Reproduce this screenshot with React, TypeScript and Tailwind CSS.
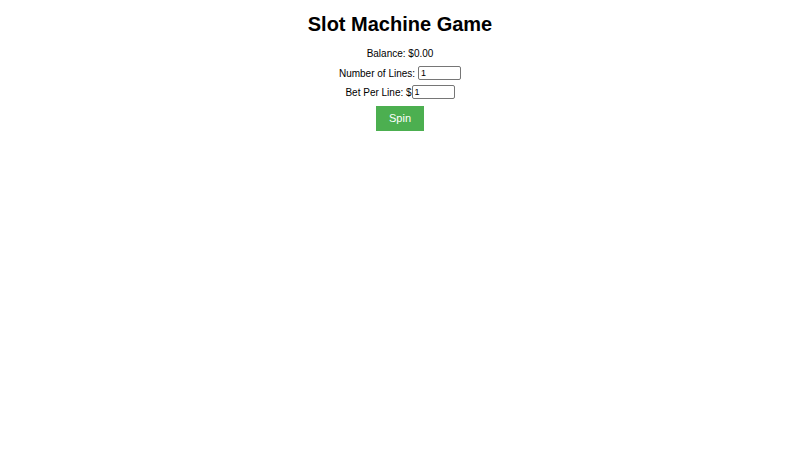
import { useState } from "react";

export default function App() {
  const [balance] = useState(0);
  const [lines, setLines] = useState("1");
  const [bet, setBet] = useState("1");

  return (
    <div className="min-h-[450px] bg-white text-center text-black font-['Liberation_Sans',Arial,sans-serif]">
      <h1 className="pt-[13px] pb-[12px] text-[20px] leading-[23px] font-bold">
        Slot Machine Game
      </h1>

      <div className="mb-[6px] text-[10px] leading-[12px]">
        Balance: ${balance.toFixed(2)}
      </div>

      <div className="mb-[5px] flex h-[14px] items-center justify-center text-[10px]">
        <label htmlFor="lines">Number of Lines:</label>
        <input
          id="lines"
          type="number"
          value={lines}
          onChange={(e) => setLines(e.target.value)}
          className="ml-[3px] h-[14px] w-[43px] appearance-none rounded-[2px] border border-[#767676] px-[2px] text-left text-[9px] leading-[12px] [&::-webkit-inner-spin-button]:appearance-none"
        />
      </div>

      <div className="mb-[6px] flex h-[14px] items-center justify-center text-[10px]">
        <label htmlFor="bet">Bet Per Line: $</label>
        <input
          id="bet"
          type="number"
          value={bet}
          onChange={(e) => setBet(e.target.value)}
          className="h-[14px] w-[43px] appearance-none rounded-[2px] border border-[#767676] px-[2px] text-left text-[9px] leading-[12px] [&::-webkit-inner-spin-button]:appearance-none"
        />
      </div>

      <button className="h-[25px] w-[48px] bg-[#4caf50] text-[11px] text-white">
        Spin
      </button>
    </div>
  );
}
